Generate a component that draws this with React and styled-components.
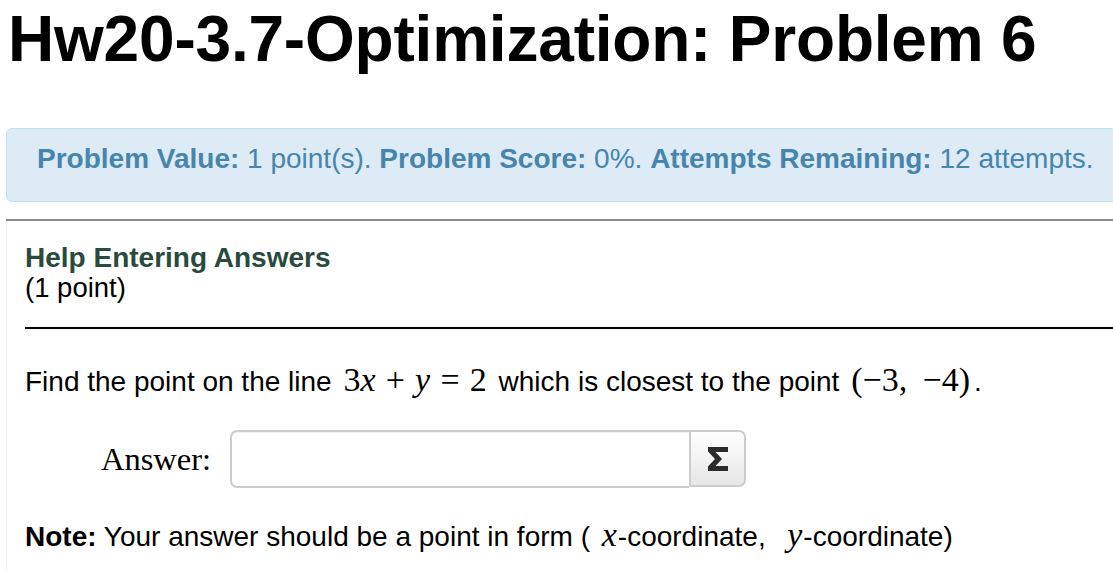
import React from 'react';
import styled, { createGlobalStyle } from 'styled-components';

const GlobalStyle = createGlobalStyle`
  html, body { margin: 0; padding: 0; background: #fff; }
  body { font-family: "Liberation Sans", Arial, sans-serif; color: #000; overflow: hidden; }
`;

const Page = styled.div`
  padding-left: 6px;
  width: 1107px;
  height: 571px;
  display: flex;
  flex-direction: column;
  overflow: hidden;
`;

const Title = styled.h1`
  margin: 1px 0 0 2px;
  font-size: 64px;
  line-height: 76px;
  font-weight: 700;
  letter-spacing: -0.2px;
  white-space: nowrap;
`;

const Alert = styled.div`
  margin-top: 51px;
  width: 1120px;
  box-sizing: border-box;
  padding: 10px 0 22px 30px;
  background: #ddebf6;
  border: 1px solid #c2e1ef;
  border-radius: 6px;
  color: #4785ad;
  font-size: 28px;
  line-height: 40px;
  white-space: nowrap;
  b { font-weight: 700; }
`;

const Rule = styled.hr`
  margin: 17px 0 0 0;
  border: none;
  height: 2px;
  background: #8a8a8a;
  flex-shrink: 0;
`;

const Problem = styled.div`
  flex: 1;
  border-left: 1px solid #eeeeee;
  padding: 22px 0 0 18px;
`;

const ProblemHeader = styled.div`
  border-bottom: 2px solid #000;
  padding-bottom: 24px;
`;

const HelpTitle = styled.div`
  font-size: 28px;
  line-height: 30px;
  font-weight: 700;
  color: #294b3d;
`;

const Points = styled.div`
  font-size: 27.5px;
  line-height: 30px;
`;

const Text = styled.p`
  margin: ${p => p.$top}px 0 0 0;
  font-size: 28px;
  line-height: 30px;
  white-space: nowrap;
  b { font-weight: 700; }
`;

const Math = styled.span`
  font-family: "Liberation Serif", "Times New Roman", serif;
  font-size: 34px;
  margin: 0 ${p => p.$right ?? 0}px 0 ${p => p.$pad || 0}px;
`;

const Mi = styled.i`
  font-style: italic;
`;

const Mo = styled.span`
  margin: 0 ${p => p.$space || 0.3}em;
`;

const AnswerRow = styled.div`
  margin: 33px 0 0 76px;
  display: flex;
  align-items: center;
`;

const AnswerLabel = styled.span`
  font-family: "Liberation Serif", "Times New Roman", serif;
  font-size: 32.5px;
  line-height: 36px;
  margin-right: 19px;
`;

const Input = styled.div`
  width: 459px;
  height: 58px;
  box-sizing: border-box;
  border: 2px solid #cccccc;
  border-right: none;
  border-radius: 7px 0 0 7px;
  background: #fff;
  box-shadow: inset 0 1px 1px rgba(0, 0, 0, 0.06);
`;

const SigmaButton = styled.div`
  width: 57px;
  height: 57px;
  box-sizing: border-box;
  border: 2px solid #cccccc;
  border-radius: 0 7px 7px 0;
  background: linear-gradient(#ffffff, #e6e6e6);
  display: flex;
  align-items: center;
  justify-content: center;
  align-self: flex-start;
  svg { display: block; }
`;

function SigmaIcon() {
  return (
    <svg width="22" height="24" viewBox="0 0 22 24">
      <path d="M1 0 H21 V5 H8.5 L15 12 L8.5 19 H21 V24 H1 V19.5 L8 12 L1 4.5 Z" fill="#2b2b2b" />
    </svg>
  );
}

export default function App() {
  return (
    <Page>
      <GlobalStyle />
      <Title>Hw20-3.7-Optimization: Problem 6</Title>
      <Alert>
        <b>Problem Value:</b> 1 point(s). <b>Problem Score:</b> 0%. <b>Attempts Remaining:</b> 12 attempts.
      </Alert>
      <Rule />
      <Problem>
        <ProblemHeader>
          <HelpTitle>Help Entering Answers</HelpTitle>
          <Points>(1 point)</Points>
        </ProblemHeader>
        <Text $top={36}>
          Find the point on the line{' '}
          <Math $pad={4} $right={4}>3<Mi>x</Mi><Mo>+</Mo><Mi>y</Mi><Mo>=</Mo>2</Math>
          {' '}which is closest to the point{' '}
          <Math $pad={4} $right={4}>(−3,<Mo $space={0.1}> </Mo>−4)</Math>.
        </Text>
        <AnswerRow>
          <AnswerLabel>Answer:</AnswerLabel>
          <Input />
          <SigmaButton><SigmaIcon /></SigmaButton>
        </AnswerRow>
        <Text $top={32}>
          <b>Note:</b> Your answer should be a point in form ( <Math $pad={4} $right={1}><Mi>x</Mi></Math>-coordinate,&nbsp; <Math $pad={6} $right={1}><Mi>y</Mi></Math>-coordinate)
        </Text>
      </Problem>
    </Page>
  );
}
